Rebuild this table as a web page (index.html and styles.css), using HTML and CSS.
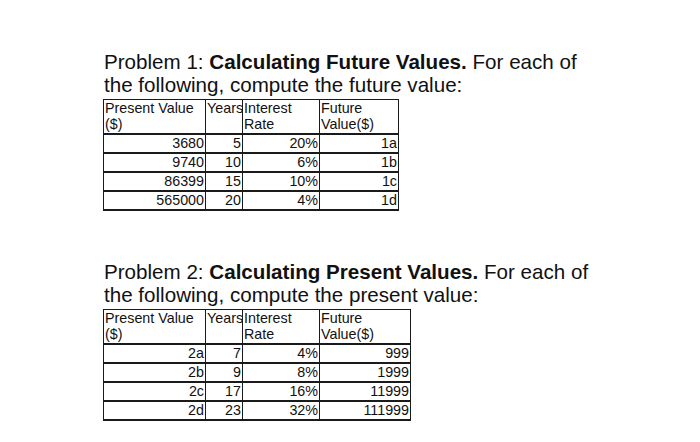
FILE: index.html
```html
<!DOCTYPE html>
<html>
<head>
<meta charset="utf-8">
<link rel="stylesheet" href="styles.css">
</head>
<body>
<div class="page">
  <section class="problem p1">
    <p class="title">Problem 1: <b>Calculating Future Values.</b> For each of the following, compute the future value:</p>
    <table class="grid g1">
      <colgroup><col class="c1"><col class="c2"><col class="c3"><col class="c4"></colgroup>
      <tr class="head"><th>Present Value ($)</th><th>Years</th><th>Interest Rate</th><th>Future Value($)</th></tr>
      <tr><td>3680</td><td>5</td><td>20%</td><td>1a</td></tr>
      <tr><td>9740</td><td>10</td><td>6%</td><td>1b</td></tr>
      <tr><td>86399</td><td>15</td><td>10%</td><td>1c</td></tr>
      <tr><td>565000</td><td>20</td><td>4%</td><td>1d</td></tr>
    </table>
  </section>
  <section class="problem p2">
    <p class="title">Problem 2: <b>Calculating Present Values.</b> For each of the following, compute the present value:</p>
    <table class="grid g2">
      <colgroup><col class="c1"><col class="c2"><col class="c3"><col class="c4w"></colgroup>
      <tr class="head"><th>Present Value ($)</th><th>Years</th><th>Interest Rate</th><th>Future Value($)</th></tr>
      <tr><td>2a</td><td>7</td><td>4%</td><td>999</td></tr>
      <tr><td>2b</td><td>9</td><td>8%</td><td>1999</td></tr>
      <tr><td>2c</td><td>17</td><td>16%</td><td>11999</td></tr>
      <tr><td>2d</td><td>23</td><td>32%</td><td>111999</td></tr>
    </table>
  </section>
</div>
</body>
</html>
```
FILE: styles.css
```css
html, body {
  margin: 0;
  padding: 0;
  background: #fff;
}
body {
  font-family: "Liberation Sans", Arial, sans-serif;
  color: #111;
}
.page {
  padding: 51px 0 0 104px;
}
.problem {
  display: flex;
  flex-direction: column;
}
.p2 {
  margin-top: 50px;
}
.title {
  margin: 0;
  width: 500px;
  font-size: 20.6px;
  line-height: 22.6px;
}
.title b {
  font-weight: bold;
}
.grid {
  margin-left: -1px;
  border-collapse: collapse;
  table-layout: fixed;
  font-size: 14.3px;
  margin-top: 3px;
}
.g1 { width: 295px; }
.g2 { width: 307px; }
.c1 { width: 102px; }
.c2 { width: 37px; }
.c3 { width: 77px; }
.c4 { width: 79px; }
.c4w { width: 91px; }
.grid th, .grid td {
  border: 1px solid #1a1a1a;
  padding: 0 1px;
  overflow: hidden;
  white-space: nowrap;
}
.grid th {
  font-weight: normal;
  text-align: left;
  vertical-align: top;
  line-height: 16px;
  height: 33px;
  white-space: normal;
}
.grid td {
  text-align: right;
  line-height: 17px;
  height: 17px;
  border-bottom-width: 2px;
}
.head th {
  border-bottom-width: 2px;
}
```
